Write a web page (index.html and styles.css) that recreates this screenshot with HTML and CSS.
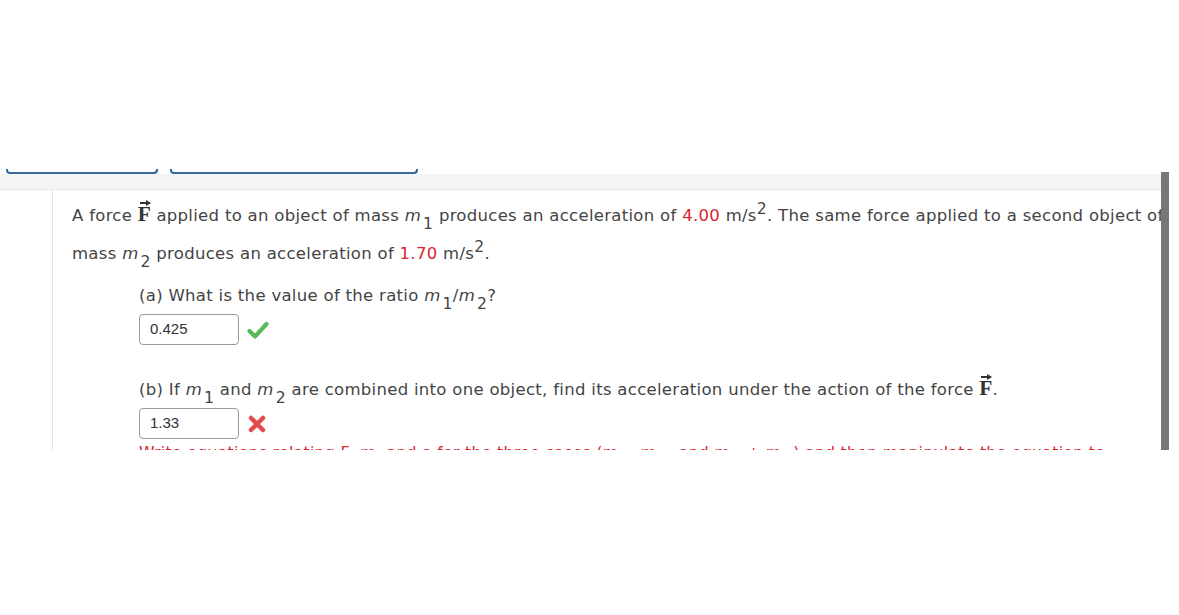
FILE: index.html
```html
<!DOCTYPE html>
<html>
<head>
<meta charset="utf-8">
<link rel="stylesheet" href="styles.css">
</head>
<body>
<div class="frame">
  <div class="tabbar">
    <div class="tab tab1"></div>
    <div class="tab tab2"></div>
  </div>
  <div class="content">
    <div class="question">
      <p class="stem"><span>A force</span> <span class="vec">F</span> <span>applied to an object of mass</span> <span class="var">m</span><sub>1</sub> <span>produces an acceleration of</span> <span class="red">4.00</span> <span>m/s</span><sup>2</sup><span>. The same force applied to a second object of</span> <span>mass</span> <span class="var">m</span><sub>2</sub> <span>produces an acceleration of</span> <span class="red">1.70</span> <span>m/s</span><sup>2</sup><span>.</span></p>
      <div class="part">
        <p class="prompt">(a) What is the value of the ratio <span class="var">m</span><sub>1</sub>/<span class="var">m</span><sub>2</sub>?</p>
        <div class="answer">
          <div class="box">0.425</div>
          <svg class="mark" width="22" height="20" viewBox="0 0 22 20"><path d="M2.5 11 L8 16.5 L19.5 4" fill="none" stroke="#5cb85c" stroke-width="4.2" stroke-linecap="round" stroke-linejoin="round"/></svg>
        </div>
      </div>
      <div class="part partb">
        <p class="prompt">(b) If <span class="var">m</span><sub>1</sub> and <span class="var">m</span><sub>2</sub> are combined into one object, find its acceleration under the action of the force <span class="vec">F</span>.</p>
        <div class="answer">
          <div class="box">1.33</div>
          <svg class="mark" width="20" height="20" viewBox="0 0 20 20"><path d="M4 4 L16 16 M16 4 L4 16" fill="none" stroke="#e5484d" stroke-width="4.5" stroke-linecap="round"/></svg>
        </div>
        <p class="hint">Write equations relating F, m, and a for the three cases (m<sub>1</sub>, m<sub>2</sub>, and m<sub>1</sub> + m<sub>2</sub>) and then manipulate the equation to</p>
      </div>
    </div>
  </div>
  <div class="scrollbar"></div>
</div>
</body>
</html>
```

FILE: styles.css
```css
html, body {
  margin: 0;
  padding: 0;
  background: #ffffff;
}
body {
  padding-top: 169px;
  font-family: "DejaVu Sans", Verdana, sans-serif;
  color: #444444;
}
.frame {
  position: relative;
  height: 281px;
  overflow: hidden;
}
.tabbar {
  position: relative;
  height: 20px;
  display: flex;
  align-items: flex-start;
  background: linear-gradient(#ffffff 0, #ffffff 5px, #f4f4f4 5px);
  border-bottom: 1px solid #e8e8e8;
  margin-right: 18px;
}
.tab {
  height: 3px;
  border: 2px solid #336a9c;
  border-top: none;
  border-radius: 0 0 4px 4px;
}
.tab1 {
  margin-left: 6px;
  width: 148px;
}
.tab2 {
  margin-left: 12px;
  width: 244px;
}
.content {
  margin-left: 52px;
  border-left: 1px solid #e6e6e6;
  padding-left: 19px;
  padding-top: 7px;
  width: 1110px;
}
.question {
  font-size: 16.5px;
  letter-spacing: 0.3px;
}
p {
  margin: 0;
}
.stem {
  line-height: 38px;
}
.var {
  font-style: italic;
}
sub {
  font-size: 0.95em;
  vertical-align: -0.5em;
  line-height: 0;
  margin-left: 2px;
}
sup {
  font-size: 0.95em;
  vertical-align: 0.42em;
  line-height: 0;
}
.vec {
  font-family: "Liberation Serif", "DejaVu Serif", serif;
  font-weight: bold;
  font-size: 1.3em;
  line-height: 1;
  position: relative;
  display: inline-block;
  color: #333;
  letter-spacing: 0;
}
.vec::before {
  content: "";
  position: absolute;
  left: 2px;
  right: 1px;
  top: -2px;
  height: 1.5px;
  background: #333;
}
.vec::after {
  content: "";
  position: absolute;
  right: 0;
  top: -4.5px;
  border-left: 5px solid #333;
  border-top: 3.2px solid transparent;
  border-bottom: 3.2px solid transparent;
}
.red {
  color: #d7262d;
}
.part {
  padding-left: 67px;
  margin-top: 11px;
}
.partb {
  margin-top: 33px;
}
.prompt {
  line-height: 24px;
}
.answer {
  display: flex;
  align-items: center;
  gap: 8px;
  margin-top: 6px;
  letter-spacing: 0;
}
.box {
  width: 88px;
  height: 29px;
  border: 1px solid #9a9a9a;
  border-radius: 4px;
  padding-left: 10px;
  font-family: "Liberation Sans", Arial, sans-serif;
  font-size: 15px;
  line-height: 28px;
  color: #333;
}
.hint {
  margin-top: 5px;
  color: #d7262d;
  font-size: 15.7px;
  line-height: 18px;
}
.scrollbar {
  position: absolute;
  left: 1161px;
  top: 3px;
  width: 8px;
  bottom: 0;
  background: #777777;
}
```
